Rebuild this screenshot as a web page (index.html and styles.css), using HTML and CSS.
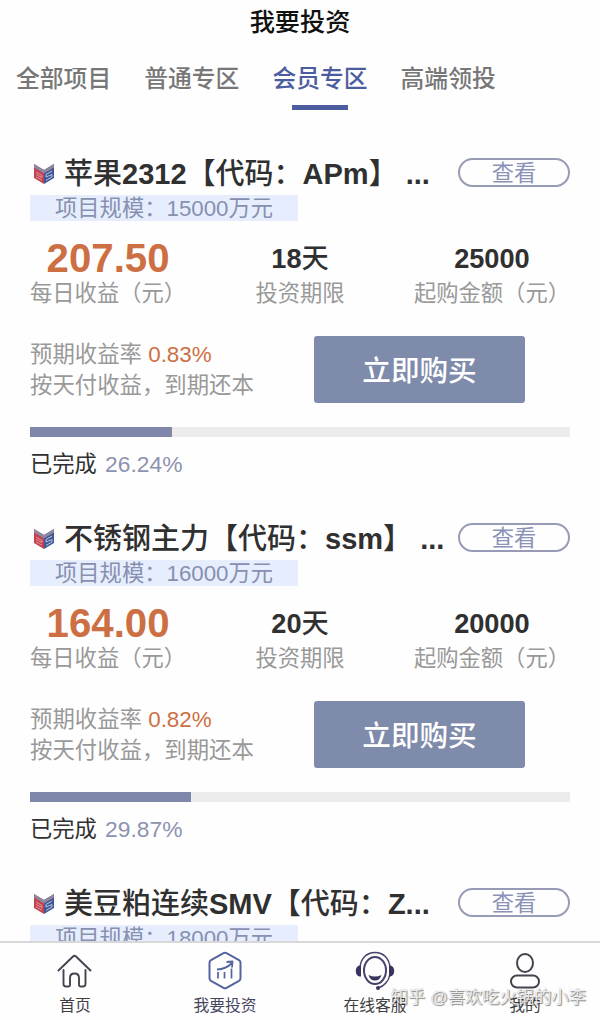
FILE: index.html
```html
<!DOCTYPE html>
<html lang="zh-CN">

<head>
    <meta charset="UTF-8">
    <meta name="viewport" content="width=device-width, initial-scale=1.0">
    <title>我要投资</title>
    <link rel="stylesheet" href="styles.css">
</head>

<body>
    <!-- logo shared by all projects -->
    <svg class="defs" width="0" height="0">
        <symbol id="logo" viewBox="0 0 20 21">
            <path d="M0 1l10 6v14L0 15z" fill="#c4424f" />
            <path d="M20 1l-10 6v14l10-6z" fill="#3f5793" />
            <path d="M0 1l10 6 10-6v3.500l-10 6L0 4.500z" fill="#8d879f" />
            <path d="M2 9l6 3.500v2L2 11.500M2 14l6 3" fill="none" stroke="#e3a9b3" stroke-width=".8" />
            <path d="M18 8l-6 3.500v2.500l6-2.500v2.500l-6 3.500" fill="none" stroke="#b9c6e4" stroke-width="1" />
        </symbol>
    </svg>

    <div class="page">
        <header class="header">我要投资</header>

        <div class="tabs">
            <a class="tab">全部项目</a>
            <a class="tab">普通专区</a>
            <a class="tab active">会员专区</a>
            <a class="tab">高端领投</a>
        </div>

        <main class="list">
            <div class="card">
                <div class="card-head">
                    <svg class="logo"><use href="#logo" /></svg>
                    <h2>苹果<b>2312</b>【代码：<b>APm</b>】 <b>...</b></h2>
                    <a class="btn-view">查看</a>
                </div>
                <div class="scale">项目规模：15000万元</div>
                <div class="stats">
                    <div class="stat"><strong class="profit">207.50</strong><span>每日收益（元）</span></div>
                    <div class="stat"><strong><b>18</b>天</strong><span>投资期限</span></div>
                    <div class="stat"><strong><b>25000</b></strong><span>起购金额（元）</span></div>
                </div>
                <div class="buy">
                    <div class="terms">
                        <p>预期收益率 <em>0.83%</em></p>
                        <p>按天付收益，到期还本</p>
                    </div>
                    <button class="btn-buy">立即购买</button>
                </div>
                <div class="progress"><div class="progress-bar" style="width: 26.24%"></div></div>
                <div class="done">已完成 <span>26.24%</span></div>
            </div>

            <div class="card">
                <div class="card-head">
                    <svg class="logo"><use href="#logo" /></svg>
                    <h2>不锈钢主力【代码：<b>ssm</b>】 <b>...</b></h2>
                    <a class="btn-view">查看</a>
                </div>
                <div class="scale">项目规模：16000万元</div>
                <div class="stats">
                    <div class="stat"><strong class="profit">164.00</strong><span>每日收益（元）</span></div>
                    <div class="stat"><strong><b>20</b>天</strong><span>投资期限</span></div>
                    <div class="stat"><strong><b>20000</b></strong><span>起购金额（元）</span></div>
                </div>
                <div class="buy">
                    <div class="terms">
                        <p>预期收益率 <em>0.82%</em></p>
                        <p>按天付收益，到期还本</p>
                    </div>
                    <button class="btn-buy">立即购买</button>
                </div>
                <div class="progress"><div class="progress-bar" style="width: 29.87%"></div></div>
                <div class="done">已完成 <span>29.87%</span></div>
            </div>

            <div class="card">
                <div class="card-head">
                    <svg class="logo"><use href="#logo" /></svg>
                    <h2>美豆粕连续<b>SMV</b>【代码：<b>Z...</b></h2>
                    <a class="btn-view">查看</a>
                </div>
                <div class="scale">项目规模：18000万元</div>
            </div>
        </main>

        <nav class="navbar">
            <a class="nav-item">
                <svg width="36" height="40" viewBox="0 0 36 40" fill="none" stroke="#45434f" stroke-width="1.9" stroke-linecap="round" stroke-linejoin="round">
                    <path d="M1.500 19.500L16 5.500q1.500-1.300 3 0L33.500 19.500" />
                    <path d="M6.500 19v14q0 2.500 2.500 2.500h2.500q1.500 0 1.500-1.500v-7q0-4.500 4.500-4.500T22 27v7q0 1.500 1.500 1.500H26q2.500 0 2.500-2.500V19" />
                </svg>
                <span>首页</span>
            </a>
            <a class="nav-item current">
                <svg width="36" height="40" viewBox="0 0 36 40" fill="none" stroke="#53649f" stroke-width="2" stroke-linejoin="round">
                    <path d="M16.500 2.200q1.500-.9 3 0l12.500 7q1.500.9 1.500 2.500v15.600q0 1.600-1.500 2.500l-12.500 7q-1.500.9-3 0L4 29.800q-1.500-.9-1.500-2.500V11.700q0-1.600 1.500-2.500z" />
                    <path d="M10 18.500q9-.5 15-6.500M19.500 11l6-.5-.5 6" stroke-width="1.8" />
                    <path d="M11 21V27.500M17.500 21V27.500M24.500 17.500v10" stroke-width="1.7" />
                </svg>
                <span>我要投资</span>
            </a>
            <a class="nav-item">
                <svg width="40" height="40" viewBox="0 0 40 40" fill="none" stroke="#45426c" stroke-width="1.5">
                    <ellipse cx="20" cy="19.500" rx="11" ry="13.500" stroke-width="2" />
                    <path d="M5 17C5.500 7 12 1.500 20 1.500S34.500 7 35 17M35 23c-1 7-6 12.500-12 14" />
                    <path d="M6 14.500v11C2.500 25.500.8 23.500.8 20S2.500 14.500 6 14.500zM34 14.500v11c3.500 0 5.200-2 5.200-5.500S37.500 14.500 34 14.500z" fill="#38345f" stroke="none" />
                    <path d="M13.500 24q6.500 3 13 0-1.500 5.500-6.500 5.500T13.500 24z" fill="#38345f" stroke="none" />
                    <circle cx="23" cy="37" r="2" fill="#38345f" stroke="none" />
                </svg>
                <span>在线客服</span>
            </a>
            <a class="nav-item">
                <svg width="36" height="40" viewBox="0 0 36 40" fill="none" stroke="#45434f" stroke-width="2">
                    <ellipse cx="18" cy="12" rx="8" ry="9" />
                    <rect x="4" y="24.500" width="28" height="12" rx="6" />
                </svg>
                <span>我的</span>
            </a>
        </nav>
        <div class="watermark">知乎 @喜欢吃火锅的小李</div>
    </div>
</body>

</html>
```
FILE: styles.css
```css
* {
    box-sizing: border-box;
}

body {
    margin: 0;
    background-color: #fefefe;
    font-family: "Liberation Sans", "Noto Sans CJK SC", sans-serif;
    color: #303030;
}

.defs {
    position: absolute;
}

.page {
    position: relative;
    display: flex;
    flex-direction: column;
    height: 1020px;
    overflow: hidden;
}

.header {
    height: 44px;
    flex: none;
    line-height: 44px;
    text-align: center;
    font-size: 25.2px;
    font-weight: 500;
    color: #111;
}

.tabs {
    display: flex;
    flex: none;
    gap: 33px;
    height: 66px;
    padding-left: 16px;
}

.tab {
    display: flex;
    flex-direction: column;
    align-items: center;
    justify-content: space-between;
    line-height: 70px;
    height: 66px;
    font-size: 23.8px;
    font-weight: 500;
    color: #777;
}

.tab.active {
    color: #4b5d9f;
}

.tab.active::after {
    content: "";
    flex: none;
    width: 56px;
    height: 5px;
    margin-top: -9px;
    background-color: #4b5d9f;
}

/* Project cards */

.list {
    flex: 1;
    min-height: 0;
    overflow: hidden;
    padding: 43px 30px 0;
}

.card {
    height: 365px;
}

.card-head {
    display: flex;
    align-items: center;
    height: 42px;
}

.logo {
    flex: none;
    width: 20px;
    height: 21px;
    margin: -2px 10px 0 4px;
}

.card-head h2 {
    flex: 1;
    margin: 0;
    font-size: 29px;
    line-height: 42px;
    font-weight: 500;
    white-space: nowrap;
}

.btn-view {
    flex: none;
    width: 112px;
    height: 29px;
    margin-top: -3px;
    border: 2px solid #989bb6;
    border-radius: 15px;
    line-height: 27px;
    text-align: center;
    font-size: 22.3px;
    color: #8a92b8;
}

.scale {
    width: 268px;
    height: 26px;
    padding-left: 25px;
    line-height: 28px;
    font-size: 22.3px;
    white-space: nowrap;
    background-color: #e6eefd;
    color: #8790b0;
}

.stats {
    display: flex;
    justify-content: space-between;
    height: 89px;
    padding-top: 17px;
}

.stat {
    display: flex;
    flex-direction: column;
    align-items: center;
    font-size: 22.3px;
    color: #999;
}

.stat strong {
    height: 40px;
    line-height: 42px;
    font-size: 27.2px;
    font-weight: 500;
    color: #303030;
}

.stat .profit {
    font-size: 40.2px;
    font-weight: bold;
    color: #cc7044;
}

.stat span {
    line-height: 32px;
}

.buy {
    display: flex;
    justify-content: space-between;
    align-items: center;
    height: 117px;
    padding: 2px 45px 0 0;
}

.terms p {
    margin: 0;
    font-size: 22.4px;
    line-height: 31px;
    color: #999;
}

.terms em {
    font-style: normal;
    color: #cc7044;
}

.btn-buy {
    width: 211px;
    height: 67px;
    padding: 0 0 2px;
    border: none;
    border-radius: 3px;
    background-color: #7f8baa;
    color: #fff;
    font-family: inherit;
    font-size: 28.6px;
    font-weight: 500;
}

.progress {
    height: 10px;
    background-color: #ececec;
}

.progress-bar {
    height: 10px;
    background-color: #7f88aa;
}

.done {
    height: 56px;
    line-height: 55px;
    font-size: 22.3px;
}

.done span {
    margin-left: 2px;
    font-size: 22.8px;
    color: #8d92b0;
}

/* Bottom navigation */

.navbar {
    display: flex;
    flex: none;
    height: 79px;
    border-top: 2px solid #d8d8d8;
    background-color: #fefefe;
}

.nav-item {
    flex: 1;
    display: flex;
    flex-direction: column;
    align-items: center;
    padding-top: 8px;
    font-size: 15.8px;
    color: #403e44;
}

.nav-item svg {
    flex: none;
}

.nav-item span {
    line-height: 29px;
}

.nav-item.current {
    color: #47465f;
}

.watermark {
    position: absolute;
    right: 14px;
    bottom: 11px;
    font-size: 17.3px;
    line-height: 24px;
    white-space: nowrap;
    color: rgba(255, 255, 255, 0.85);
    text-shadow: 1px 1px 1px rgba(0, 0, 0, 0.45), 0 0 1px rgba(0, 0, 0, 0.35);
}
```
